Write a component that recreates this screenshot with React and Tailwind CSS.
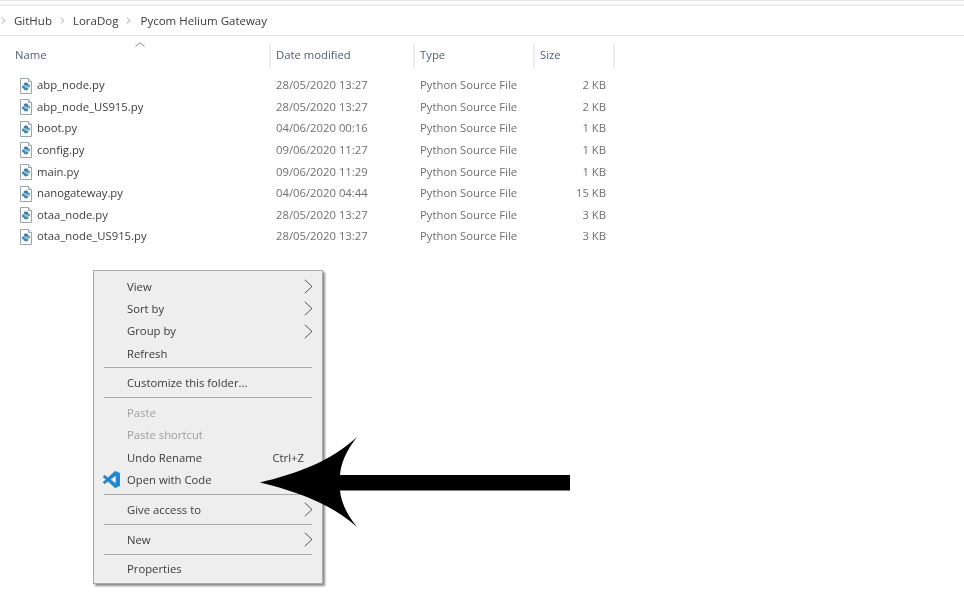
import { ChevronRight } from 'lucide-react'

const files = [
  { name: 'abp_node.py', date: '28/05/2020 13:27', size: '2 KB' },
  { name: 'abp_node_US915.py', date: '28/05/2020 13:27', size: '2 KB' },
  { name: 'boot.py', date: '04/06/2020 00:16', size: '1 KB' },
  { name: 'config.py', date: '09/06/2020 11:27', size: '1 KB' },
  { name: 'main.py', date: '09/06/2020 11:29', size: '1 KB' },
  { name: 'nanogateway.py', date: '04/06/2020 04:44', size: '15 KB' },
  { name: 'otaa_node.py', date: '28/05/2020 13:27', size: '3 KB' },
  { name: 'otaa_node_US915.py', date: '28/05/2020 13:27', size: '3 KB' },
]

// Python source file icon
const PyFileIcon = () => (
  <svg width="14" height="16" viewBox="0 0 14 16" className="shrink-0">
    <path d="M1.5 0.5H9.5L12.5 3.5V15.5H1.5Z" fill="#fff" stroke="#9aa4ae" />
    <path d="M9.5 0.5V3.5H12.5" fill="#e8edf2" stroke="#9aa4ae" />
    <path d="M7 4.5C5.4 4.5 4.8 5.2 4.8 6.2V7H7.2V7.6H4.2C3.4 7.6 3 8.3 3 9.1C3 10 3.4 10.6 4.2 10.6H4.9V9.8C4.9 9 5.5 8.6 6.2 8.6H8.2C8.8 8.6 9.2 8.2 9.2 7.6V6.2C9.2 5.1 8.4 4.5 7 4.5Z" fill="#3c7fb1" />
    <path d="M7 12.5C8.6 12.5 9.2 11.8 9.2 10.8V10H6.8V9.4H9.8C10.6 9.4 11 8.7 11 7.9C11 7 10.6 6.4 9.8 6.4H9.4V7.8C9.4 8.6 8.8 9.1 8 9.1H6C5.4 9.1 4.9 9.5 4.9 10.1V10.8C4.9 11.9 5.6 12.5 7 12.5Z" fill="#3f8fa8" />
  </svg>
)

const VsCodeIcon = () => (
  <svg width="17" height="17" viewBox="0 0 24 24" fill="#1f8ad2">
    <path d="M23.15 2.587L18.21.21a1.494 1.494 0 0 0-1.705.29l-9.46 8.63-4.12-3.128a.999.999 0 0 0-1.276.057L.327 7.261A1 1 0 0 0 .326 8.74L3.899 12 .326 15.26a1 1 0 0 0 .001 1.479L1.65 17.94a.999.999 0 0 0 1.276.057l4.12-3.128 9.46 8.63a1.492 1.492 0 0 0 1.704.29l4.942-2.377A1.5 1.5 0 0 0 24 20.06V3.939a1.5 1.5 0 0 0-.85-1.352zm-5.146 14.861L10.826 12l7.178-5.448v10.896z" />
  </svg>
)

const Crumb = ({ label }) => (
  <>
    <span>{label}</span>
    <ChevronRight className="w-[11px] h-[11px] text-[#777]" strokeWidth={1.5} />
  </>
)

const HeaderCell = ({ label, className }) => (
  <div className={`h-[25px] flex items-center border-r-2 border-[#eeeeee] ${className}`}>{label}</div>
)

const FileRow = ({ file }) => (
  <div className="h-[21.57px] flex items-center text-[#6f6f6f]">
    <div className="w-[271px] pl-[19px] flex items-center gap-[4px] text-[#3c3c3c]">
      <PyFileIcon />
      <span>{file.name}</span>
    </div>
    <div className="w-[144px] pl-[5px]">{file.date}</div>
    <div className="w-[120px] pl-[5px]">Python Source File</div>
    <div className="w-[71px] text-right">{file.size}</div>
  </div>
)

const Separator = () => (
  <div className="h-[7.5px] flex items-center px-[10px] pb-[2px]">
    <div className="h-px w-full bg-[#a8a8a8]" />
  </div>
)

const MenuItem = ({ label, disabled, submenu, shortcut, icon }) => (
  <div className={`h-[22.3px] flex items-center relative pl-[33px] pr-[9px] ${disabled ? 'text-[#a0a0a0]' : 'text-[#3a3a3a]'}`}>
    {icon && <div className="absolute left-[9px] top-[2px]">{icon}</div>}
    <span className="flex-1">{label}</span>
    {shortcut && <span className="pr-[9px]">{shortcut}</span>}
    {submenu && (
      <svg width="9" height="15" viewBox="0 0 9 15" fill="none" stroke="#555" strokeWidth="1" className="-mt-px">
        <path d="M0.8 0.8L8 7.5L0.8 14.2" />
      </svg>
    )}
  </div>
)

const ContextMenu = () => (
  <div className="absolute left-[93px] top-[270px] w-[230px] h-[314px] bg-[#eeeeee] border border-[#a9a9a9] pt-[5px] shadow-[2px_2px_2px_rgba(0,0,0,0.45)]">
    <MenuItem label="View" submenu />
    <MenuItem label="Sort by" submenu />
    <MenuItem label="Group by" submenu />
    <MenuItem label="Refresh" />
    <Separator />
    <MenuItem label="Customize this folder..." />
    <Separator />
    <MenuItem label="Paste" disabled />
    <MenuItem label="Paste shortcut" disabled />
    <MenuItem label="Undo Rename" shortcut="Ctrl+Z" />
    <MenuItem label="Open with Code" icon={<VsCodeIcon />} />
    <Separator />
    <MenuItem label="Give access to" submenu />
    <Separator />
    <MenuItem label="New" submenu />
    <Separator />
    <MenuItem label="Properties" />
  </div>
)

// Big annotation arrow drawn over the menu
const Arrow = () => (
  <svg className="absolute left-[255px] top-[432px]" width="320" height="100" viewBox="255 432 320 100" fill="#000">
    <path d="M260 482.5C295 474 330 462 357 437C347 450 341 462 340 475H570V490.5H340C341 502 347 515 357 527C330 503 295 491 260 482.5Z" />
  </svg>
)

export default function App() {
  return (
    <div className="relative w-[964px] h-[602px] overflow-hidden bg-white text-[11.3px] blur-[0.35px] font-['Open_Sans','Noto_Sans',sans-serif]">
      <div className="h-px bg-[#e6e6e6]" />
      <div className="mt-[3px] h-[2px] bg-[#eeeeee]" />

      {/* Breadcrumb */}
      <div className="h-[30px] flex items-center gap-[5px] border-b border-[#e3e3e3] text-[11.5px] text-[#3a3a3a]">
        <ChevronRight className="w-[11px] h-[11px] text-[#777] -ml-[2px]" strokeWidth={1.5} />
        <Crumb label="GitHub" />
        <Crumb label="LoraDog" />
        <span className="ml-px">Pycom Helium Gateway</span>
      </div>

      {/* Column headers */}
      <div className="relative mt-[7px] flex text-[#4d6079]">
        <svg className="absolute left-[135px] -top-px" width="10" height="5" viewBox="0 0 10 5" fill="none" stroke="#888" strokeWidth="1">
          <path d="M0.5 4.5L5 0.7L9.5 4.5" />
        </svg>
        <HeaderCell label="Name" className="w-[271px] pl-[15px]" />
        <HeaderCell label="Date modified" className="w-[144px] pl-[5px]" />
        <HeaderCell label="Type" className="w-[120px] pl-[5px]" />
        <HeaderCell label="Size" className="w-[80px] pl-[5px]" />
      </div>

      {/* File list */}
      <div className="mt-[7px]">
        {files.map((file) => (
          <FileRow key={file.name} file={file} />
        ))}
      </div>

      <ContextMenu />
      <Arrow />
    </div>
  )
}
